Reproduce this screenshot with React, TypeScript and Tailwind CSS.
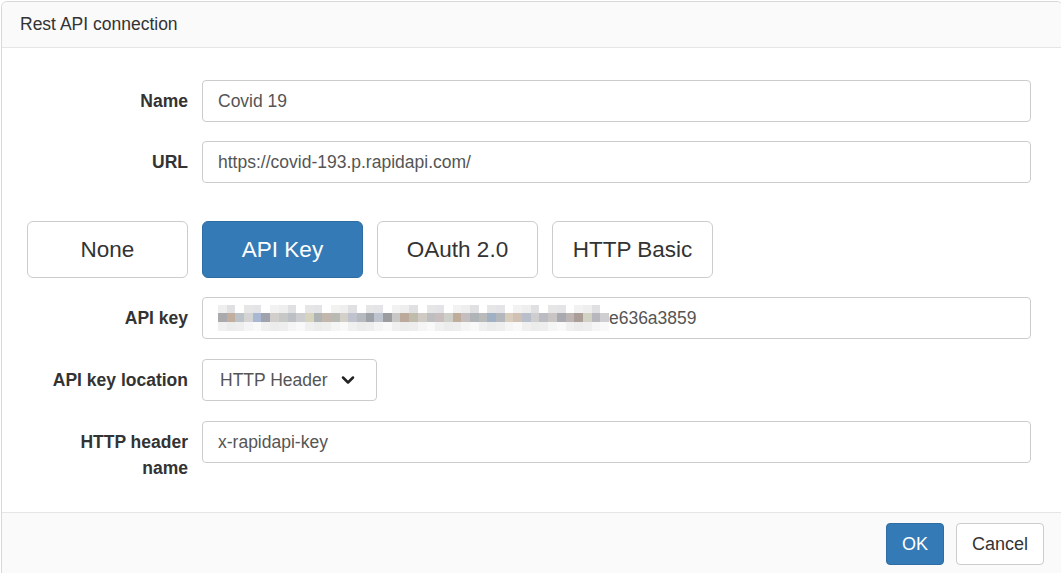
import { ChevronDown } from "lucide-react";

const mid = [
  "bg-[#a9a9ae]", "bg-[#c2ae9f]", "bg-[#bcc3c8]", "bg-[#d4d4d4]", "bg-[#a8b8d2]", "bg-[#a0a3ae]",
  "bg-[#d2cecb]", "bg-[#c6c8c8]", "bg-[#bcc0c4]", "bg-[#cdcdcf]", "bg-[#d6d4bf]", "bg-[#b0b3b3]",
  "bg-[#c2b6ad]", "bg-[#b8bab3]", "bg-[#d3d0c9]", "bg-[#c0c2cd]", "bg-[#b6b9be]", "bg-[#9ea1a7]",
  "bg-[#bdc4cd]", "bg-[#9a9c9f]", "bg-[#c9c7c5]", "bg-[#bba99b]", "bg-[#c0bcac]", "bg-[#cfcac4]",
  "bg-[#bebec1]", "bg-[#c9bebe]", "bg-[#cfcfca]", "bg-[#bfac9a]", "bg-[#c4bebe]", "bg-[#afb4b6]",
  "bg-[#bababa]", "bg-[#9fb1c3]", "bg-[#b4b8bd]", "bg-[#d8ccbc]", "bg-[#d0c1b4]", "bg-[#b8bfca]",
  "bg-[#cecece]", "bg-[#babcc1]", "bg-[#c9c5c4]", "bg-[#a9a9b0]", "bg-[#bdb4b4]", "bg-[#ab9e99]",
  "bg-[#d2d2c4]", "bg-[#b8b7bd]", "bg-[#cfcfd2]",
];
const top = [
  "bg-[#eeeeee]", "bg-white", "bg-[#e6e6e6]", "bg-[#e0e0e2]", "bg-[#f2f2f2]", "bg-[#e4e4e8]", "bg-white",
];
const bot = ["bg-[#f0f0f0]", "bg-[#f5f5f5]", "bg-[#ececec]", "bg-[#f9f9f9]", "bg-[#eeeeee]"];

function Blurred() {
  return (
    <div className="flex flex-col">
      <div className="flex">
        {mid.map((_, i) => (
          <span key={i} className={`h-[8px] w-[8.7px] ${top[(i * 3) % top.length]}`} />
        ))}
      </div>
      <div className="flex">
        {mid.map((c, i) => (
          <span key={i} className={`h-[9px] w-[8.7px] ${c}`} />
        ))}
      </div>
      <div className="flex">
        {mid.map((_, i) => (
          <span key={i} className={`h-[9px] w-[8.7px] ${bot[(i * 2) % bot.length]}`} />
        ))}
      </div>
    </div>
  );
}

function Row({ label, children }: { label: React.ReactNode; children: React.ReactNode }) {
  return (
    <div className="flex items-start gap-[14px]">
      <div className="w-[161px] shrink-0 pt-[8px] text-right text-[17.5px] font-bold leading-[26px] text-[#333]">
        {label}
      </div>
      {children}
    </div>
  );
}

const input =
  "flex h-[42px] flex-1 items-center rounded-[4px] border border-[#cccccc] bg-white px-[15px] text-[17.5px] text-[#555]";

export default function App() {
  return (
    <div className="h-[573px] w-[1061px] overflow-hidden bg-white pt-[1px] pl-[1px] font-['Liberation_Sans',Arial,sans-serif]">
      <div className="flex h-[600px] w-[1062px] flex-col rounded-[6px] border border-[#d9d9d9] bg-white">
        <div className="flex h-[46px] items-center rounded-t-[6px] border-b border-[#e5e5e5] bg-[#fafafa] px-[18px] text-[17.5px] text-[#333]">
          Rest API connection
        </div>

        <div className="flex h-[464px] flex-col pl-[25px] pr-[31px] pt-[32px]">
          <div className="flex flex-col gap-[19px]">
            <Row label="Name">
              <div className={input}>Covid 19</div>
            </Row>
            <Row label="URL">
              <div className={input}>https://covid-193.p.rapidapi.com/</div>
            </Row>
          </div>

          <div className="mt-[38px] flex gap-[14px]">
            {["None", "API Key", "OAuth 2.0", "HTTP Basic"].map((t) => (
              <div
                key={t}
                className={
                  t === "API Key"
                    ? "flex h-[57px] w-[161px] items-center justify-center rounded-[6px] border border-[#2e6da4] bg-[#337ab7] text-[22.5px] text-white"
                    : "flex h-[57px] w-[161px] items-center justify-center rounded-[6px] border border-[#cccccc] bg-white text-[22.5px] text-[#333]"
                }
              >
                {t}
              </div>
            ))}
          </div>

          <div className="mt-[19px] flex flex-col gap-[20px]">
            <Row label="API key">
              <div className={input}>
                <Blurred />
                <span>e636a3859</span>
              </div>
            </Row>
            <Row label="API key location">
              <div className="flex h-[42px] w-[175px] items-center justify-between rounded-[4px] border border-[#cccccc] bg-white pl-[17px] pr-[18px] text-[17.5px] text-[#555]">
                <span>HTTP Header</span>
                <ChevronDown size={20} strokeWidth={3} className="text-[#222]" />
              </div>
            </Row>
            <Row
              label={
                <>
                  HTTP header
                  <br />
                  name
                </>
              }
            >
              <div className={input}>x-rapidapi-key</div>
            </Row>
          </div>
        </div>

        <div className="flex flex-1 items-start justify-end gap-[12px] border-t border-[#e5e5e5] bg-[#fafafa] pr-[18px] pt-[10px]">
          <div className="flex h-[42px] w-[58px] items-center justify-center rounded-[4px] border border-[#2e6da4] bg-[#337ab7] text-[18px] text-white">
            OK
          </div>
          <div className="flex h-[42px] w-[88px] items-center justify-center rounded-[4px] border border-[#cccccc] bg-white text-[18px] text-[#333]">
            Cancel
          </div>
        </div>
      </div>
    </div>
  );
}
